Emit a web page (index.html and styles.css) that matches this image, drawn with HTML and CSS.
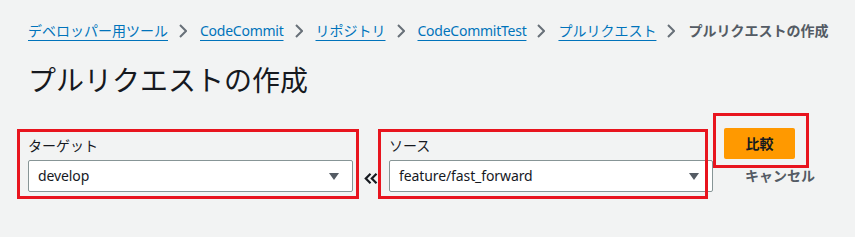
FILE: index.html
```html
<!DOCTYPE html>
<html lang="ja">
<head>
<meta charset="utf-8">
<title>プルリクエストの作成</title>
<link rel="stylesheet" href="styles.css">
</head>
<body>
<div class="page">
  <nav class="breadcrumbs">
    <a class="crumb" href="#">デベロッパー用ツール</a>
    <svg class="sep" width="8" height="14" viewBox="0 0 8 14"><polyline points="1,1 7,7 1,13" fill="none" stroke="#687078" stroke-width="2"/></svg>
    <a class="crumb latin" href="#">CodeCommit</a>
    <svg class="sep" width="8" height="14" viewBox="0 0 8 14"><polyline points="1,1 7,7 1,13" fill="none" stroke="#687078" stroke-width="2"/></svg>
    <a class="crumb" href="#">リポジトリ</a>
    <svg class="sep" width="8" height="14" viewBox="0 0 8 14"><polyline points="1,1 7,7 1,13" fill="none" stroke="#687078" stroke-width="2"/></svg>
    <a class="crumb latin" href="#">CodeCommitTest</a>
    <svg class="sep" width="8" height="14" viewBox="0 0 8 14"><polyline points="1,1 7,7 1,13" fill="none" stroke="#687078" stroke-width="2"/></svg>
    <a class="crumb" href="#">プルリクエスト</a>
    <svg class="sep" width="8" height="14" viewBox="0 0 8 14"><polyline points="1,1 7,7 1,13" fill="none" stroke="#687078" stroke-width="2"/></svg>
    <span class="crumb-current">プルリクエストの作成</span>
  </nav>

  <h1 class="title">プルリクエストの作成</h1>

  <div class="form-row">
    <div class="field field-target">
      <div class="label">ターゲット</div>
      <div class="select">
        <span class="select-value">develop</span>
        <svg class="caret" width="10" height="7" viewBox="0 0 10 7"><polygon points="0,0 10,0 5,7" fill="#545b64"/></svg>
      </div>
    </div>
    <div class="merge-arrow">
      <svg width="14" height="11" viewBox="0 0 14 11"><polyline points="6.5,0.8 1.8,5.5 6.5,10.2" fill="none" stroke="#16191f" stroke-width="2.2"/><polyline points="12.5,0.8 7.8,5.5 12.5,10.2" fill="none" stroke="#16191f" stroke-width="2.2"/></svg>
    </div>
    <div class="field field-source">
      <div class="label">ソース</div>
      <div class="select">
        <span class="select-value">feature/fast_forward</span>
        <svg class="caret" width="10" height="7" viewBox="0 0 10 7"><polygon points="0,0 10,0 5,7" fill="#545b64"/></svg>
      </div>
    </div>
    <div class="actions">
      <button class="btn-primary" type="button">比較</button>
      <a class="btn-link" href="#">キャンセル</a>
    </div>

    <div class="mark mark-target"></div>
    <div class="mark mark-source"></div>
    <div class="mark mark-button"></div>
  </div>
</div>
</body>
</html>
```

FILE: styles.css
```css
html, body {
  margin: 0;
  padding: 0;
  background: #f2f3f3;
}

body {
  min-height: 100vh;
  font-family: "Noto Sans", "Noto Sans CJK JP", sans-serif;
  color: #16191f;
  font-size: 14px;
  line-height: 20px;
}

.page {
  box-sizing: border-box;
  min-height: 237px;
  padding: 21px 0 0 28px;
}

.breadcrumbs {
  display: flex;
  align-items: center;
  height: 20px;
  white-space: nowrap;
}

.crumb {
  color: #0073bb;
  text-decoration: underline;
  text-decoration-thickness: 1px;
  text-underline-offset: 4px;
}

.latin {
  letter-spacing: -0.25px;
}

.sep {
  display: block;
  margin: 0 13px 0 11px;
}

.crumb-current {
  color: #545b64;
  font-weight: 700;
}

.title {
  margin: 21px 0 0 0;
  font-size: 28px;
  line-height: 36px;
  font-weight: 400;
  color: #16191f;
}

.form-row {
  position: relative;
  display: flex;
  align-items: flex-start;
  margin-top: 30px;
}

.field {
  padding-top: 8px;
}

.field-target {
  width: 325px;
}

.field-source {
  width: 324px;
}

.label {
  margin-bottom: 4px;
  color: #16191f;
}

.select {
  box-sizing: border-box;
  height: 32px;
  display: flex;
  align-items: center;
  justify-content: space-between;
  padding: 0 13px 0 9px;
  background: #ffffff;
  border: 1px solid #879596;
  border-radius: 2px;
}

.select-value {
  color: #16191f;
  letter-spacing: -0.1px;
}

.caret {
  display: block;
}

.merge-arrow {
  width: 36px;
  height: 32px;
  margin-top: 32px;
  display: flex;
  align-items: center;
  justify-content: center;
}

.merge-arrow svg {
  display: block;
  margin-top: 4px;
}

.actions {
  margin-left: 11px;
  display: flex;
  flex-direction: column;
  align-items: flex-start;
}

.btn-primary {
  width: 71px;
  height: 31px;
  border: none;
  border-radius: 2px;
  background: #ff9900;
  color: #16191f;
  font-family: inherit;
  font-size: 14px;
  font-weight: 700;
  line-height: 20px;
  padding: 0;
}

.btn-link {
  margin: 7px 0 0 21px;
  color: #545b64;
  font-weight: 700;
  text-decoration: none;
  white-space: nowrap;
}

.mark {
  position: absolute;
  box-sizing: border-box;
  border: 3px solid #e8141e;
  pointer-events: none;
}

.mark-target {
  left: -11px;
  top: 1px;
  width: 342px;
  height: 70px;
}

.mark-source {
  left: 350px;
  top: 1px;
  width: 330px;
  height: 70px;
}

.mark-button {
  left: 685px;
  top: -15px;
  width: 96px;
  height: 55px;
}
```
